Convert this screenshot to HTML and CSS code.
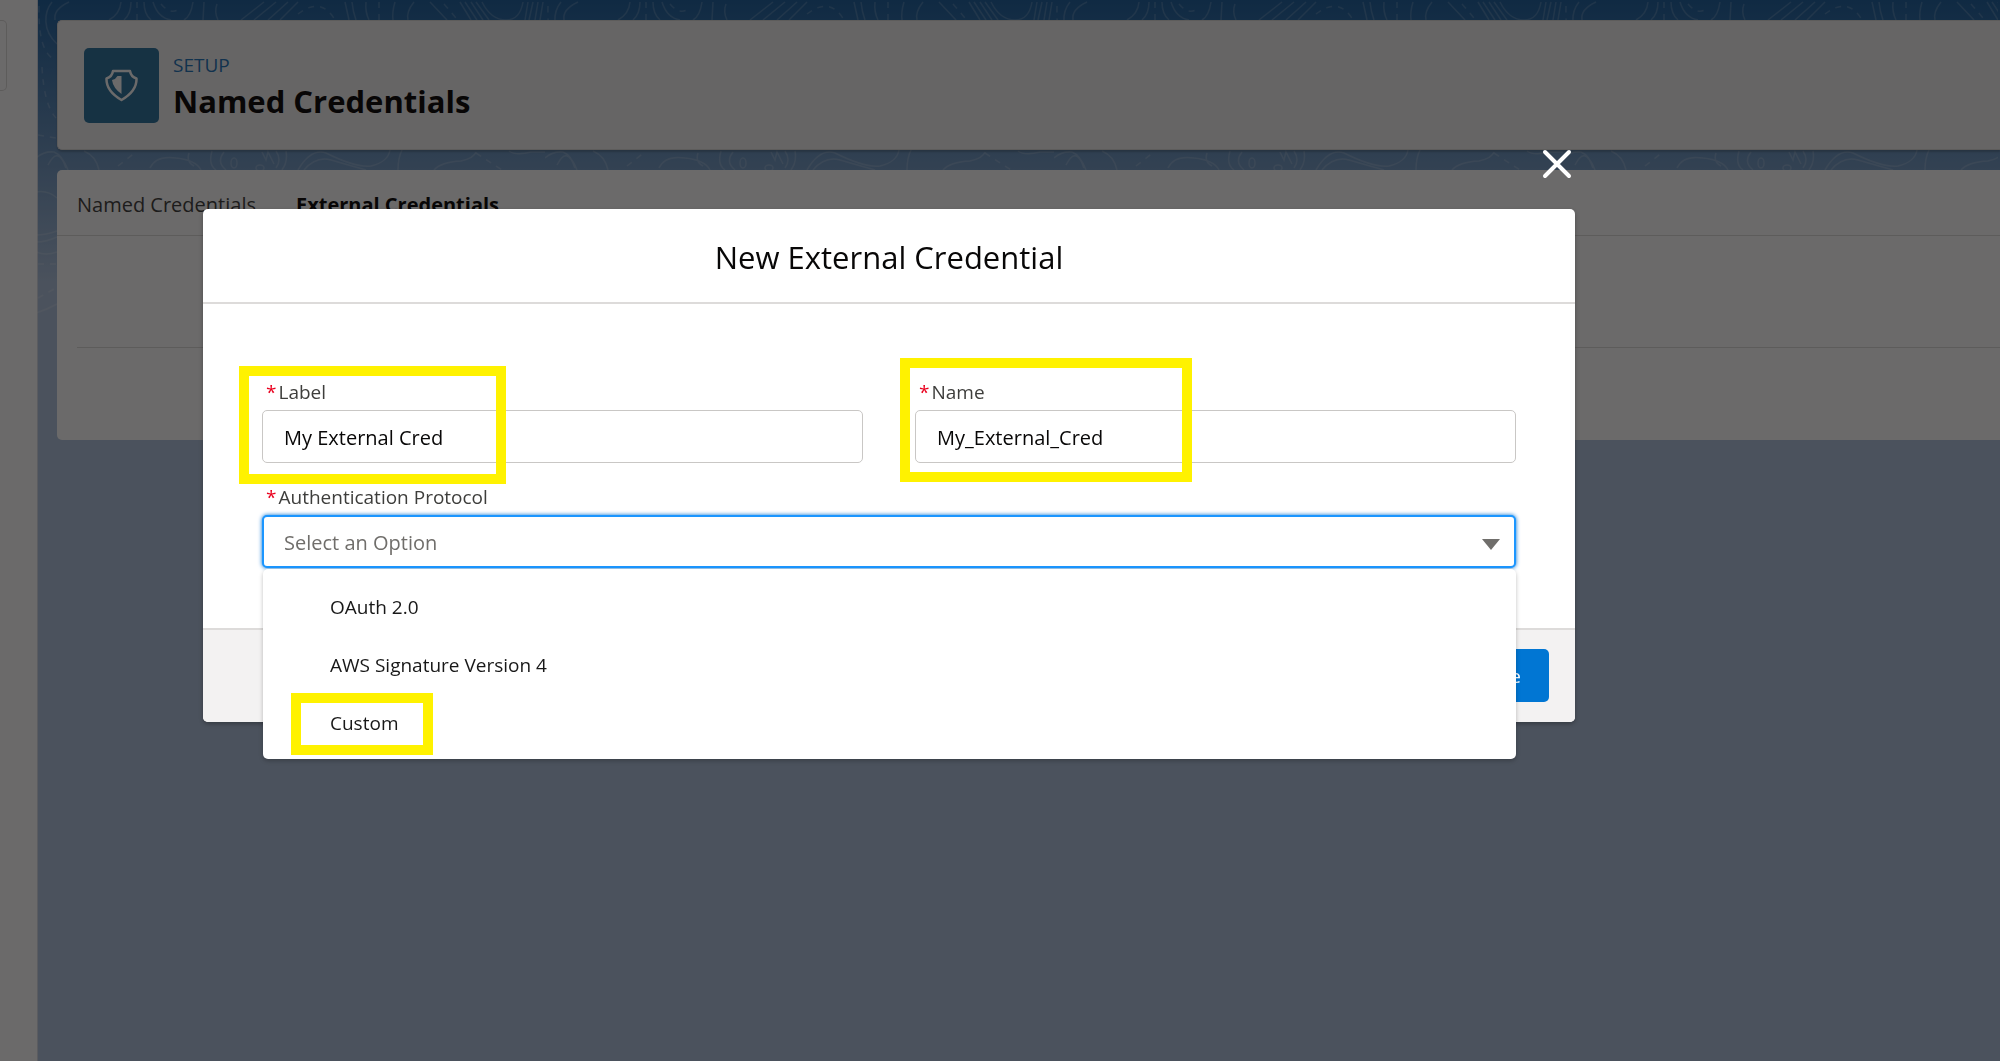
FILE: index.html
```html
<!DOCTYPE html>
<html lang="en">
<head>
<meta charset="utf-8">
<title>Named Credentials</title>
<link rel="stylesheet" href="styles.css">
</head>
<body>
<div class="app">
  <aside class="sidebar"><div class="sidebar-box"></div></aside>
  <main class="content">
    <svg class="topo" aria-hidden="true">
      <defs>
        <pattern id="contours" width="509" height="340" patternUnits="userSpaceOnUse">
          <g fill="none" stroke="#fff" stroke-opacity=".17" stroke-width="1.5">
            <path d="M16 2C8 12 6 30 21 44M33 2C20 8 18 14 19 20M85 2Q84 14 73 20M95 2Q95 14 88 20M108 2Q108 14 115 20M117 2Q122 18 135 20M157 2Q155 16 148 20M168 2L167 20M181 4Q178 12 182 20M228 2L205 20M240 2L218 20M252 2L232 20M262 2L244 20M309 2L313 20M316 2Q317 12 320 20M330 2Q329 12 333 20M359 2Q356 12 357 20M378 2Q370 12 372 20M394 2L411 20M424 2L435 20M429 2L441 20M435 2L447 20M440 2L453 20M446 2Q455 20 470 20Q484 20 487 2M492 2L489 20M497 2L493 20M502 2L499 20M507 2L504 20"/>
            <path d="M0 158Q8 151 18 152Q26 155 32 170M48 151Q60 156 63 170M12 165Q22 145 30 168M114 168Q120 155 140 158Q160 160 165 170M153 153Q150 162 158 166M176 151Q172 165 180 170M188 152Q180 162 190 170M226 152L230 160L232 152L238 164M240 151Q246 160 240 168M250 151Q252 162 246 170M262 170Q275 148 290 153Q320 168 335 166Q352 162 354 150M268 170Q280 156 295 160L330 170M362 170Q362 158 366 150M398 170Q405 162 425 161Q438 158 440 152M473 151Q480 156 495 152H509"/>
            <ellipse cx="198" cy="163" rx="3" ry="5"/><ellipse cx="224" cy="168" rx="4" ry="3"/>
            <path d="M0 192Q12 190 21 198M0 235Q10 235 21 231M0 242Q10 242 21 237M0 252Q10 256 21 252M0 313Q10 310 21 304"/>
            <path stroke-dasharray="6 6" d="M3 6Q2 48 16 58M6 67Q8 105 20 118M2 135L20 138M101 2V20M125 4Q135 16 145 8M262 14Q285-4 299 20M343 2V20M408 4L420 18M82 166L100 152M440 153L466 170M2 264H20M2 298L20 288"/>
          </g>
        </pattern>
      </defs>
      <rect width="100%" height="340" fill="url(#contours)"/>
    </svg>
    <header class="page-header">
      <span class="page-icon">
        <svg width="33" height="33" viewBox="0 0 33 33" aria-hidden="true">
          <path d="M8 2H25Q26 8 31.500 9.500Q32 22 16.500 31Q1 22 1.500 9.500Q7 8 8 2Z" fill="none" stroke="#fff" stroke-width="2.500" stroke-linejoin="round"/>
          <path d="M16.500 7H12.500Q11 10 7 11Q8 19 16.500 25Z" fill="#fff"/>
        </svg>
      </span>
      <div class="page-heading">
        <p class="eyebrow">SETUP</p>
        <h1>Named Credentials</h1>
      </div>
    </header>
    <section class="card">
      <nav class="tabs">
        <a class="tab" href="#named">Named Credentials</a>
        <a class="tab tab-active" href="#external">External Credentials</a>
      </nav>
      <div class="card-body"><div class="card-row"></div></div>
    </section>
  </main>
</div>

<div class="backdrop">
  <section class="modal" role="dialog" aria-modal="true" aria-labelledby="modal-title">
    <button class="close" type="button" aria-label="Close">
      <svg width="30" height="30" viewBox="0 0 30 30" aria-hidden="true"><path d="M3 3L27 27M27 3L3 27" stroke="#fff" stroke-width="4" stroke-linecap="round"/></svg>
    </button>
    <header class="modal-header"><h2 id="modal-title">New External Credential</h2></header>
    <form class="modal-body">
      <div class="field">
        <label for="cred-label"><abbr>*</abbr>Label</label>
        <input id="cred-label" type="text" value="My External Cred">
        <span class="mark mark-label"></span>
      </div>
      <div class="field">
        <label for="cred-name"><abbr>*</abbr>Name</label>
        <input id="cred-name" type="text" value="My_External_Cred">
        <span class="mark mark-name"></span>
      </div>
      <div class="field field-wide">
        <label for="protocol"><abbr>*</abbr>Authentication Protocol</label>
        <div class="picker">
          <select id="protocol">
            <option>Select an Option</option>
            <option>OAuth 2.0</option>
            <option>AWS Signature Version 4</option>
            <option>Custom</option>
          </select>
          <svg class="caret" width="18" height="11" viewBox="0 0 18 11" aria-hidden="true"><path d="M0 0H18L9 11Z" fill="#706e6b"/></svg>
          <ul class="options" role="listbox" aria-label="Authentication Protocol">
            <li role="option">OAuth 2.0</li>
            <li role="option">AWS Signature Version 4</li>
            <li role="option">Custom<span class="mark mark-option"></span></li>
          </ul>
        </div>
      </div>
    </form>
    <footer class="modal-footer"><button class="save" type="button">Create</button></footer>
  </section>
</div>
</body>
</html>
```
FILE: styles.css
```css
* { box-sizing: border-box; }

body {
  margin: 0;
  background: #b0c4df;
  color: #080707;
  font-family: "Open Sans", "Noto Sans", sans-serif;
  font-size: 19px;
  line-height: 24px;
}

h1, h2, p, ul { margin: 0; padding: 0; }
input, select, button { font: inherit; }

.app { display: flex; min-height: 100vh; }

.sidebar {
  flex: none;
  width: 38px;
  padding-top: 20px;
  background: #fff;
  border-right: 1px solid #d8dde6;
}
.sidebar-box {
  width: 7px;
  height: 71px;
  border: 1px solid #dddbda;
  border-left: 0;
  border-radius: 0 5px 5px 0;
}

.content {
  position: relative;
  flex: 1;
  padding: 20px 0 0 19px;
  background: linear-gradient(#1b5f9e, #b0c4df 285px);
}
.topo {
  position: absolute;
  top: 0;
  left: -2px;
  width: 100%;
  height: 340px;
}

.page-header {
  position: relative;
  display: flex;
  gap: 14px;
  height: 130px;
  padding: 27px 26px;
  background: #f3f3f3;
  border: 1px solid #dddbda;
  border-right: 0;
  border-radius: 5px 0 0 5px;
  box-shadow: 0 2px 2px rgba(0, 0, 0, .2);
}
.page-icon {
  display: grid;
  place-items: center;
  width: 75px;
  height: 75px;
  border-radius: 5px;
  background: #2c749f;
}
.page-heading { padding-top: 5px; }
.eyebrow { color: #1f74b8; }
h1 { font-size: 31px; line-height: 48px; font-weight: 700; }

.card {
  position: relative;
  height: 270px;
  margin-top: 20px;
  background: #fff;
  border-radius: 5px 0 0 5px;
}
.tabs {
  display: flex;
  gap: 40px;
  padding: 23px 20px 18px;
  border-bottom: 1px solid #dddbda;
}
.tab { color: #3e3e3c; font-size: 20px; text-decoration: none; }
.tab-active { color: #080707; font-weight: 700; }
.card-body { padding-left: 20px; }
.card-row { height: 112px; border-bottom: 1px solid #dddbda; }

.backdrop {
  position: fixed;
  inset: 0;
  padding: 209px 425px 0 203px;
  background: rgba(8, 7, 7, .6);
}
.modal {
  position: relative;
  background: #fff;
  border-radius: 5px;
  box-shadow: 0 2px 4px rgba(0, 0, 0, .3);
}
.close {
  position: absolute;
  top: -60px;
  right: 3px;
  padding: 0;
  border: 0;
  background: none;
}
.close svg { display: block; }

.modal-header {
  padding: 23px 20px 20px;
  border-bottom: 2px solid #dddbda;
  text-align: center;
}
h2 { font-size: 31px; line-height: 50px; font-weight: 400; }

.modal-body {
  display: grid;
  grid-template-columns: 1fr 1fr;
  gap: 22px 52px;
  padding: 76px 59px 60px;
}
.field { position: relative; display: grid; gap: 6px; }
.field-wide { grid-column: 1 / -1; }
label { padding-left: 4px; color: #3e3e3c; }
abbr { margin-right: 2px; color: #ea001e; }

.field input, select {
  width: 100%;
  height: 53px;
  padding: 2px 21px 0;
  border: 1px solid #c9c7c5;
  border-radius: 5px;
  background: #fff;
  color: #080707;
  font-size: 20px;
  outline: 0;
}
.picker { position: relative; }
select {
  display: block;
  appearance: none;
  border: 2px solid #1b96ff;
  padding: 2px 20px 0;
  box-shadow: 0 0 4px #0070d2;
  color: #706e6b;
}
.caret { position: absolute; top: 24px; right: 16px; }
.options {
  position: absolute;
  top: 54px;
  left: 1px;
  right: 0;
  padding: 9px 0 7px;
  border-radius: 5px;
  background: #fff;
  box-shadow: 0 2px 4px rgba(0, 0, 0, .25);
  list-style: none;
}
.options li {
  position: relative;
  padding: 17px 67px;
  color: #181818;
}

.modal-footer {
  display: flex;
  justify-content: flex-end;
  padding: 19px 26px 20px;
  border-top: 2px solid #dddbda;
  border-radius: 0 0 5px 5px;
  background: #f3f2f2;
}
.save {
  height: 53px;
  padding: 0 28px;
  border: 0;
  border-radius: 5px;
  background: #0176d3;
  color: #fff;
}

/* Highlight frames */
.mark { position: absolute; border: 10px solid #fff200; pointer-events: none; }
.mark-label { top: -14px; left: -23px; width: 267px; height: 118px; }
.mark-name { top: -22px; left: -15px; width: 292px; height: 124px; }
.mark-option { top: -1px; left: 28px; width: 142px; height: 62px; }
```
